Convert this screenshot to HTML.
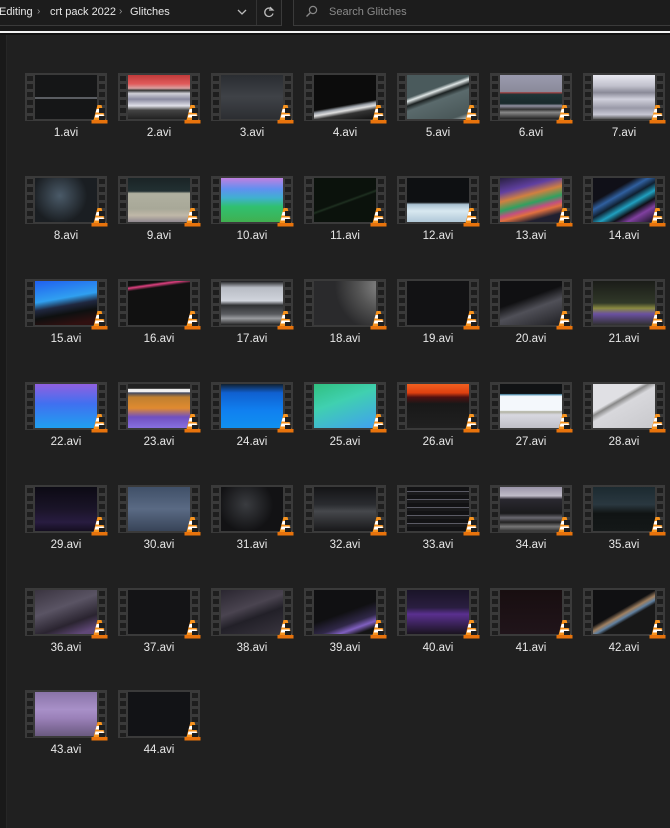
<!DOCTYPE html>
<html><head><meta charset="utf-8"><style>
*{margin:0;padding:0;box-sizing:border-box}
body{width:670px;height:828px;background:#202020;position:relative;overflow:hidden;font-family:"Liberation Sans",sans-serif;color:#e6e6e6}
.top{position:absolute;left:0;top:0;width:670px;height:31px;background:#191919}
.addr{position:absolute;left:-2px;top:-2px;width:284px;height:28px;background:#1c1c1c;border:1px solid #3a3a3a;border-top:none}
.srch{position:absolute;left:293px;top:-2px;width:380px;height:28px;background:#1c1c1c;border:1px solid #3a3a3a;border-top:none}
.line{position:absolute;left:0;top:31px;width:670px;height:2px;background:#f2f2f2}
.line2{position:absolute;left:0;top:33px;width:670px;height:2px;background:#111}
.left{position:absolute;left:0;top:35px;width:7px;height:793px;background:#191919;border-right:1px solid #262626}
.t{position:absolute;width:82px;height:48px;background:#3a3a3a}
.t:before,.t:after{content:"";position:absolute;top:3px;width:6px;height:44px;background:repeating-linear-gradient(#1e1e1e 0 5px,transparent 5px 8px)}
.t:before{left:2px}.t:after{right:2px}
.i{position:absolute;left:10px;top:2px;width:62px;height:44px;overflow:hidden}
.c{position:absolute;right:-1px;bottom:-3px;width:17px;height:20px}
.l{position:absolute;width:82px;text-align:center;font-size:11.5px;color:#e8e8e8}
.tx{position:absolute;font-size:11px;top:6px;color:#e6e6e6}
</style></head><body>
<div class="top"></div>
<div class="addr"></div>
<div class="tx" style="left:-1px">Editing</div>
<div class="tx" style="left:37px;color:#999;font-size:10px;top:6px">›</div>
<div class="tx" style="left:50px">crt pack 2022</div>
<div class="tx" style="left:119px;color:#999;font-size:10px;top:6px">›</div>
<div class="tx" style="left:130px">Glitches</div>
<svg style="position:absolute;left:237px;top:9px" width="10" height="7"><path d="M1 1l4 4 4-4" stroke="#bbb" fill="none" stroke-width="1.3"/></svg>
<div style="position:absolute;left:256px;top:0;width:1px;height:25px;background:#333"></div>
<svg style="position:absolute;left:263px;top:6px" width="12" height="12"><path d="M9.5 4A4.2 4.2 0 1 0 10 7.5" stroke="#bbb" fill="none" stroke-width="1.3"/><path d="M7 1l3 3H6" stroke="#bbb" fill="none" stroke-width="1.2"/></svg>
<div class="srch"></div>
<svg style="position:absolute;left:305px;top:5px" width="13" height="13"><circle cx="8" cy="5" r="3.6" stroke="#888" fill="none" stroke-width="1.2"/><path d="M5.5 7.5L1.5 11.5" stroke="#888" stroke-width="1.3"/></svg>
<div class="tx" style="left:329px;color:#8a8a8a;font-size:11px">Search Glitches</div>
<div class="line"></div><div class="line2"></div>
<div class="left"></div>
<svg width="0" height="0" style="position:absolute"><defs><g id="cone"><path d="M6.5 1h4l4 15h-12z" fill="#f7931e"/><path d="M5.6 5h5.8l1 3.5h-7.8z M4.5 10.5h8l0.8 3h-9.6z" fill="#fff"/><path d="M0.5 16h16v3.5h-16z" fill="#e8730c"/></g></defs></svg>

<div class="t" style="left:25px;top:73px"><div class="i" style="background:linear-gradient(#151617 0 50%,#5a5d62 50% 55%,#151617 55%)"></div><svg class="c"><use href="#cone"/></svg></div><div class="l" style="left:25px;top:127px">1.avi</div>
<div class="t" style="left:118px;top:73px"><div class="i" style="background:linear-gradient(#c03a3a 0,#e05a5a 20%,#d8a0a0 30%,#333 35%,#d0d0d8 42%,#8a8aa0 55%,#e0e0e8 70%,#444 80%,#222 100%)"></div><svg class="c"><use href="#cone"/></svg></div><div class="l" style="left:118px;top:127px">2.avi</div>
<div class="t" style="left:211px;top:73px"><div class="i" style="background:linear-gradient(#2a2d31,#3f4247 50%,#2c2e32)"></div><svg class="c"><use href="#cone"/></svg></div><div class="l" style="left:211px;top:127px">3.avi</div>
<div class="t" style="left:304px;top:73px"><div class="i" style="background:linear-gradient(170deg,#0c0c0c 0 65%,#9aa0a8 70%,#e0e0e0 75%,#333 82%,#111)"></div><svg class="c"><use href="#cone"/></svg></div><div class="l" style="left:304px;top:127px">4.avi</div>
<div class="t" style="left:397px;top:73px"><div class="i" style="background:linear-gradient(160deg,#4a5a5c 0 35%,#dfe6e6 40%,#1c2222 47%,#5a6a6c 55%,#4a5859 90%,#c0c8c8)"></div><svg class="c"><use href="#cone"/></svg></div><div class="l" style="left:397px;top:127px">5.avi</div>
<div class="t" style="left:490px;top:73px"><div class="i" style="background:linear-gradient(#9a9aae 0,#8a8a9a 38%,#a04040 40%,#1f3436 44%,#1a2a2c 65%,#9090a0 70%,#333 78%,#888 85%,#222)"></div><svg class="c"><use href="#cone"/></svg></div><div class="l" style="left:490px;top:127px">6.avi</div>
<div class="t" style="left:583px;top:73px"><div class="i" style="background:linear-gradient(#e8e8f0 0,#c0c0cc 25%,#8a8a98 40%,#d0d0dc 55%,#9a9aa8 75%,#c8c8d4 90%,#555)"></div><svg class="c"><use href="#cone"/></svg></div><div class="l" style="left:583px;top:127px">7.avi</div>

<div class="t" style="left:25px;top:176px"><div class="i" style="background:radial-gradient(circle at 40% 40%,#4a5a68 0,#1a1e22 60%),#141414"></div><svg class="c"><use href="#cone"/></svg></div><div class="l" style="left:25px;top:230px">8.avi</div>
<div class="t" style="left:118px;top:176px"><div class="i" style="background:linear-gradient(#1a2426 0,#223032 30%,#b0b0a0 35%,#a8a898 70%,#c0b8a8 85%,#908890)"></div><svg class="c"><use href="#cone"/></svg></div><div class="l" style="left:118px;top:230px">9.avi</div>
<div class="t" style="left:211px;top:176px"><div class="i" style="background:linear-gradient(#c080e0 0,#6090f0 25%,#40b0d0 45%,#30c070 65%,#40b050 100%)"></div><svg class="c"><use href="#cone"/></svg></div><div class="l" style="left:211px;top:230px">10.avi</div>
<div class="t" style="left:304px;top:176px"><div class="i" style="background:linear-gradient(160deg,#0b120c 0 50%,#1e3020 53%,#0b120c 56%)"></div><svg class="c"><use href="#cone"/></svg></div><div class="l" style="left:304px;top:230px">11.avi</div>
<div class="t" style="left:397px;top:176px"><div class="i" style="background:linear-gradient(#0e1012 0 55%,#a8c0d0 60%,#d8e8f0 75%,#b0c8d8)"></div><svg class="c"><use href="#cone"/></svg></div><div class="l" style="left:397px;top:230px">12.avi</div>
<div class="t" style="left:490px;top:176px"><div class="i" style="background:linear-gradient(165deg,#282040 0,#6040a0 25%,#d08040 40%,#30a060 55%,#c05080 65%,#e07040 72%,#202030 85%)"></div><svg class="c"><use href="#cone"/></svg></div><div class="l" style="left:490px;top:230px">13.avi</div>
<div class="t" style="left:583px;top:176px"><div class="i" style="background:linear-gradient(150deg,#101018 0 30%,#3060a0 40%,#102030 50%,#20a0c0 60%,#101018 70%,#8040a0 80%,#101018)"></div><svg class="c"><use href="#cone"/></svg></div><div class="l" style="left:583px;top:230px">14.avi</div>

<div class="t" style="left:25px;top:279px"><div class="i" style="background:linear-gradient(170deg,#2060f0 0,#30a0f0 40%,#202840 55%,#0e1010 70%,#301010 90%)"></div><svg class="c"><use href="#cone"/></svg></div><div class="l" style="left:25px;top:333px">15.avi</div>
<div class="t" style="left:118px;top:279px"><div class="i" style="background:linear-gradient(172deg,#111 0 10%,#e04080 14%,#111 20%)"></div><svg class="c"><use href="#cone"/></svg></div><div class="l" style="left:118px;top:333px">16.avi</div>
<div class="t" style="left:211px;top:279px"><div class="i" style="background:linear-gradient(#1a1a1c 0,#b8bcc4 15%,#d0d4dc 45%,#303234 55%,#585a5e 75%,#9a9ca0 85%,#222)"></div><svg class="c"><use href="#cone"/></svg></div><div class="l" style="left:211px;top:333px">17.avi</div>
<div class="t" style="left:304px;top:279px"><div class="i" style="background:radial-gradient(circle at 110% 10%,#888 0,#555 30%,#2a2a2c 60%),#222"></div><svg class="c"><use href="#cone"/></svg></div><div class="l" style="left:304px;top:333px">18.avi</div>
<div class="t" style="left:397px;top:279px"><div class="i" style="background:#121214"></div><svg class="c"><use href="#cone"/></svg></div><div class="l" style="left:397px;top:333px">19.avi</div>
<div class="t" style="left:490px;top:279px"><div class="i" style="background:linear-gradient(160deg,#101012 0 40%,#505058 60%,#202024)"></div><svg class="c"><use href="#cone"/></svg></div><div class="l" style="left:490px;top:333px">20.avi</div>
<div class="t" style="left:583px;top:279px"><div class="i" style="background:linear-gradient(#1a1c18 0,#303828 50%,#8a8a40 62%,#6a50a0 75%,#303030)"></div><svg class="c"><use href="#cone"/></svg></div><div class="l" style="left:583px;top:333px">21.avi</div>

<div class="t" style="left:25px;top:382px"><div class="i" style="background:linear-gradient(#9060e0 0,#4070f0 45%,#20a0f0 100%)"></div><svg class="c"><use href="#cone"/></svg></div><div class="l" style="left:25px;top:436px">22.avi</div>
<div class="t" style="left:118px;top:382px"><div class="i" style="background:linear-gradient(#222 0 10%,#f0f0f0 12% 18%,#404860 20%,#c08030 30%,#e08a30 55%,#7050c0 75%,#8870e0 100%)"></div><svg class="c"><use href="#cone"/></svg></div><div class="l" style="left:118px;top:436px">23.avi</div>
<div class="t" style="left:211px;top:382px"><div class="i" style="background:linear-gradient(#102030 0,#1060d0 20%,#1080f0 60%,#1090f0)"></div><svg class="c"><use href="#cone"/></svg></div><div class="l" style="left:211px;top:436px">24.avi</div>
<div class="t" style="left:304px;top:382px"><div class="i" style="background:linear-gradient(160deg,#30c080 0,#40d0b0 40%,#40a0f0 100%)"></div><svg class="c"><use href="#cone"/></svg></div><div class="l" style="left:304px;top:436px">25.avi</div>
<div class="t" style="left:397px;top:382px"><div class="i" style="background:linear-gradient(#f06020 0,#e04010 20%,#501010 30%,#181818 45%,#202020)"></div><svg class="c"><use href="#cone"/></svg></div><div class="l" style="left:397px;top:436px">26.avi</div>
<div class="t" style="left:490px;top:382px"><div class="i" style="background:linear-gradient(#101214 0 22%,#60a0c0 24%,#f4f8fc 28% 60%,#b0b0a0 63%,#d8d8e0 70%,#c0c0c8)"></div><svg class="c"><use href="#cone"/></svg></div><div class="l" style="left:490px;top:436px">27.avi</div>
<div class="t" style="left:583px;top:382px"><div class="i" style="background:linear-gradient(150deg,#e0e0e4 0 35%,#888 40%,#d8d8dc 48%,#c8c8cc 100%)"></div><svg class="c"><use href="#cone"/></svg></div><div class="l" style="left:583px;top:436px">28.avi</div>

<div class="t" style="left:25px;top:485px"><div class="i" style="background:linear-gradient(#0c0a14 0,#1a1428 50%,#281c40 80%,#140e20)"></div><svg class="c"><use href="#cone"/></svg></div><div class="l" style="left:25px;top:539px">29.avi</div>
<div class="t" style="left:118px;top:485px"><div class="i" style="background:linear-gradient(#405068,#5a6a84 50%,#384458)"></div><svg class="c"><use href="#cone"/></svg></div><div class="l" style="left:118px;top:539px">30.avi</div>
<div class="t" style="left:211px;top:485px"><div class="i" style="background:radial-gradient(circle at 40% 40%,#3a3c40 0,#121214 60%)"></div><svg class="c"><use href="#cone"/></svg></div><div class="l" style="left:211px;top:539px">31.avi</div>
<div class="t" style="left:304px;top:485px"><div class="i" style="background:linear-gradient(#141416 0,#2a2c30 40%,#46484c 55%,#18181a)"></div><svg class="c"><use href="#cone"/></svg></div><div class="l" style="left:304px;top:539px">32.avi</div>
<div class="t" style="left:397px;top:485px"><div class="i" style="background:repeating-linear-gradient(#121214 0 4px,#5a5a64 4px 5px,#1a1a1c 5px 8px),#222"></div><svg class="c"><use href="#cone"/></svg></div><div class="l" style="left:397px;top:539px">33.avi</div>
<div class="t" style="left:490px;top:485px"><div class="i" style="background:linear-gradient(#9a94a8 0,#c0bcc8 20%,#2a2830 28%,#1a1a1c 60%,#6a6870 70%,#222 80%,#777 90%,#333)"></div><svg class="c"><use href="#cone"/></svg></div><div class="l" style="left:490px;top:539px">34.avi</div>
<div class="t" style="left:583px;top:485px"><div class="i" style="background:linear-gradient(#1c2a30 0,#2a3840 40%,#101414 60%,#141818)"></div><svg class="c"><use href="#cone"/></svg></div><div class="l" style="left:583px;top:539px">35.avi</div>

<div class="t" style="left:25px;top:588px"><div class="i" style="background:linear-gradient(160deg,#3a3440 0,#5a5464 40%,#2a2430 70%,#604878 90%)"></div><svg class="c"><use href="#cone"/></svg></div><div class="l" style="left:25px;top:642px">36.avi</div>
<div class="t" style="left:118px;top:588px"><div class="i" style="background:#141416"></div><svg class="c"><use href="#cone"/></svg></div><div class="l" style="left:118px;top:642px">37.avi</div>
<div class="t" style="left:211px;top:588px"><div class="i" style="background:linear-gradient(160deg,#2a2630 0,#4a4450 40%,#222028 60%,#38343e)"></div><svg class="c"><use href="#cone"/></svg></div><div class="l" style="left:211px;top:642px">38.avi</div>
<div class="t" style="left:304px;top:588px"><div class="i" style="background:linear-gradient(160deg,#101012 0 50%,#302848 70%,#8060c0 80%,#141414 90%)"></div><svg class="c"><use href="#cone"/></svg></div><div class="l" style="left:304px;top:642px">39.avi</div>
<div class="t" style="left:397px;top:588px"><div class="i" style="background:linear-gradient(#1a1428 0,#2a1e40 40%,#5a3090 55%,#1a1420)"></div><svg class="c"><use href="#cone"/></svg></div><div class="l" style="left:397px;top:642px">40.avi</div>
<div class="t" style="left:490px;top:588px"><div class="i" style="background:linear-gradient(#180e10,#20141a)"></div><svg class="c"><use href="#cone"/></svg></div><div class="l" style="left:490px;top:642px">41.avi</div>
<div class="t" style="left:583px;top:588px"><div class="i" style="background:linear-gradient(150deg,#101012 0 45%,#a08060 52%,#6080a0 57%,#181818 62%)"></div><svg class="c"><use href="#cone"/></svg></div><div class="l" style="left:583px;top:642px">42.avi</div>

<div class="t" style="left:25px;top:690px"><div class="i" style="background:linear-gradient(#8a74a8 0,#a890c8 40%,#9a80b8 60%,#6a5a80)"></div><svg class="c"><use href="#cone"/></svg></div><div class="l" style="left:25px;top:744px">43.avi</div>
<div class="t" style="left:118px;top:690px"><div class="i" style="background:#121316"></div><svg class="c"><use href="#cone"/></svg></div><div class="l" style="left:118px;top:744px">44.avi</div>
</body></html>
